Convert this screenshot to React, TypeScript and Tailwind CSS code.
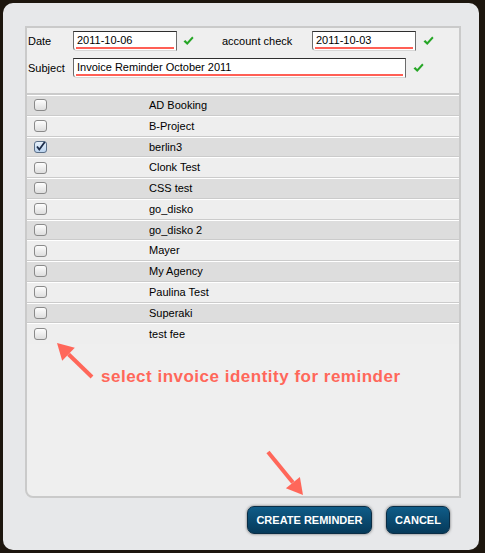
import type { ReactNode } from 'react';

const identities = [
  'AD Booking',
  'B-Project',
  'berlin3',
  'Clonk Test',
  'CSS test',
  'go_disko',
  'go_disko 2',
  'Mayer',
  'My Agency',
  'Paulina Test',
  'Superaki',
  'test fee',
];

const selected = ['berlin3'];

function ValidMark() {
  return (
    <svg width="11" height="10" viewBox="0 0 11 10" className="shrink-0">
      <path d="M0.5 5.6 L2.3 4 L4.2 6 L9.2 0.6 L10.6 2 L4.3 8.9 Z" fill="#26a626" />
    </svg>
  );
}

function Field({ width, value }: { width: number; value: string }) {
  return (
    <div
      className="flex h-[20px] flex-col justify-between rounded-bl-[4px] border border-[#6b6b6b] border-t-[#2e2e2e] border-b-[#d6d6d6] bg-white"
      style={{ width }}
    >
      <span className="pl-[3px] pt-[2px] text-[11px] leading-[13px] text-black">{value}</span>
      <div className="mx-[2px] mb-[1px] h-[2px] bg-[#ff5f55]" />
    </div>
  );
}

function Check({ checked }: { checked: boolean }) {
  return (
    <svg width="13" height="12" viewBox="0 0 13 12" className="shrink-0">
      <defs>
        <linearGradient id={checked ? 'cbOn' : 'cbOff'} x1="0" y1="0" x2="0" y2="1">
          <stop offset="0" stopColor={checked ? '#e9f2fb' : '#ffffff'} />
          <stop offset="1" stopColor={checked ? '#b9d2ee' : '#dcdcdc'} />
        </linearGradient>
      </defs>
      <rect x="0.5" y="0.5" width="12" height="11" rx="2.5" fill={`url(#${checked ? 'cbOn' : 'cbOff'})`} stroke={checked ? '#5a6f88' : '#8a8a8a'} />
      {checked && <path d="M3 5.5 L5.3 8.6 L10.8 1" fill="none" stroke="#1d2d4a" strokeWidth="1.8" />}
    </svg>
  );
}

function Button({ width, children }: { width: number; children: ReactNode }) {
  return (
    <button
      type="button"
      className="h-[28px] rounded-[7px] border border-[#0a2d45] bg-gradient-to-b from-[#0f5c88] to-[#063a5a] text-center text-[11px] font-bold text-white shadow-[0_0_3px_rgba(0,0,0,0.55)]"
      style={{ width }}
    >
      {children}
    </button>
  );
}

export default function App() {
  return (
    <div
      className="relative h-[553px] w-[485px] overflow-hidden bg-[#1d160e] pl-[3px] pt-[3px]"
      style={{ fontFamily: '"Liberation Sans", Arial, sans-serif' }}
    >
      <div className="h-[547px] w-[476px] rounded-[10px] bg-[#e7e8ea] pt-[23px]">
        <div className="ml-[22px] h-[472px] w-[436px] rounded-bl-[8px] border-2 border-[#cacaca] bg-[#efefef]">
          <div className="mt-[3px] flex h-[20px] items-center text-[11px] text-black">
            <span className="w-[46px] pl-[1px]">Date</span>
            <Field width={104} value="2011-10-06" />
            <span className="ml-[6px]"><ValidMark /></span>
            <span className="ml-[28px] w-[90px]">account check</span>
            <Field width={104} value="2011-10-03" />
            <span className="ml-[7px]"><ValidMark /></span>
          </div>
          <div className="mt-[7px] flex h-[20px] items-center text-[11px] text-black">
            <span className="w-[46px] pl-[1px]">Subject</span>
            <Field width={333} value="Invoice Reminder October 2011" />
            <span className="ml-[7px]"><ValidMark /></span>
          </div>

          <div className="mt-[15px] border-t-2 border-[#cbcbcb]">
            {identities.map((name, i) => {
              const last = i === identities.length - 1;
              return (
                <div
                  key={name}
                  className={`grid h-[20.75px] grid-cols-[122px_1fr] items-center border-t border-t-white text-[11px] text-black ${
                    last ? '' : 'border-b border-b-[#cbcbcb]'
                  } ${i % 2 === 0 ? 'bg-[#dddddd]' : 'bg-[#eeeeee]'}`}
                >
                  <span className="pl-[7px]">
                    <Check checked={selected.includes(name)} />
                  </span>
                  <span>{name}</span>
                </div>
              );
            })}
          </div>

          <p className="mt-[23px] pl-[74px] text-[17px] font-bold leading-[20px] tracking-[0.5px] text-[#ff675a]">
            select invoice identity for reminder
          </p>
        </div>

        <div className="mt-[8px] flex justify-end gap-[14px] pr-[29px]">
          <Button width={125}>CREATE REMINDER</Button>
          <Button width={64}>CANCEL</Button>
        </div>
      </div>

      {/* pointer arrows */}
      <svg className="pointer-events-none absolute left-0 top-0" width="485" height="553">
        <g fill="#ff675a" stroke="#ff675a">
          <line x1="92" y1="377" x2="68.5" y2="354.2" strokeWidth="4" />
          <polygon points="57,343 74.8,347.7 62.2,360.7" stroke="none" />
          <line x1="268" y1="452" x2="292.9" y2="482.6" strokeWidth="4" />
          <polygon points="303,495 285.9,488.3 299.9,476.9" stroke="none" />
        </g>
      </svg>
    </div>
  );
}
